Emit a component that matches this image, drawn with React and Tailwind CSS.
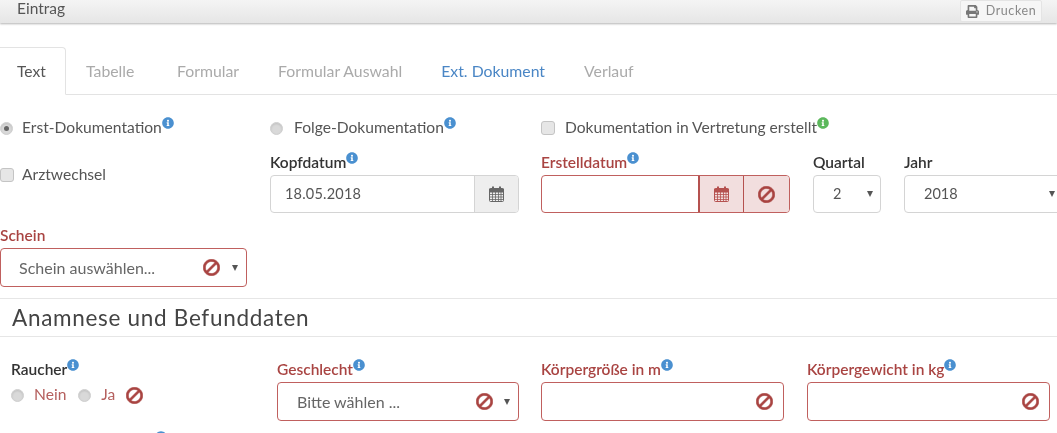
import React from 'react';
import { FaBan, FaInfoCircle, FaPrint } from 'react-icons/fa';

const Info = ({ className = 'text-[#4a90d0]' }) => (
    <FaInfoCircle className={`inline-block relative -top-[6px] w-[12px] h-[12px] ${className}`} />
);

const Ban = () => <FaBan className="w-[17px] h-[17px] text-[#a94442] stroke-[18] shrink-0 -scale-x-100" />;

const Calendar = ({ className }) => (
    <svg viewBox="0 0 15 16" className={`w-[15px] h-[16px] ${className}`} fill="none" stroke="currentColor">
        <rect x="0.5" y="2.5" width="14" height="13" rx="1" />
        <path d="M0.5 3h14v3h-14z" fill="currentColor" />
        <path d="M3.5 6v9M6.5 6v9M9.5 6v9M12 6v9M1 8.5h13M1 11h13M1 13.5h13" strokeWidth="0.8" />
        <path d="M4 0.5v3.5M11 0.5v3.5" strokeWidth="2" />
    </svg>
);

const Caret = () => (
    <span className="w-0 h-0 border-x-[3.5px] border-x-transparent border-t-[6px] border-t-[#555] shrink-0" />
);

const Radio = ({ checked = false }) => (
    <span className="w-[13px] h-[13px] rounded-full border border-[#cfcfcf] bg-[#d9d9d9] shadow-[inset_0_1px_2px_rgba(0,0,0,0.12)] flex items-center justify-center shrink-0">
        {checked && <span className="w-[5px] h-[5px] rounded-full bg-[#666]" />}
    </span>
);

const Check = () => (
    <span className="w-[14px] h-[14px] rounded-[3px] border border-[#c4c4c4] bg-[#e6e6e6] shrink-0" />
);

const Label = ({ error, info = true, children }) => (
    <div className={`h-[22px] text-[15.5px] font-semibold leading-[18px] whitespace-nowrap ${error ? 'text-[#a94442]' : 'text-[#333]'}`}>
        {children}
        {info && <Info />}
    </div>
);

const tabs = [
    ['Tabelle', 'w-[52px] text-[#aaa]'],
    ['Formular', 'text-[#aaa]'],
    ['Formular Auswahl', 'text-[#aaa]'],
    ['Ext. Dokument', 'text-[#4a86c5]'],
    ['Verlauf', 'text-[#aaa]'],
];

export default function App() {
    return (
        <div className="w-[1057px] h-[433px] overflow-hidden bg-white text-[15.6px] text-[#555] blur-[0.3px] font-['Lato','Open_Sans',sans-serif]">
            {/* top bar */}
            <div className="h-[23px] flex justify-between pl-[17px] pr-[15px] bg-gradient-to-b from-[#f4f4f4] to-[#e6e6e6] shadow-[0_1px_2px_rgba(0,0,0,0.3)]">
                <span className="text-[15.5px] leading-[17px] text-[#555]">Eintrag</span>
                <button className="w-[82px] h-[22px] flex items-center justify-center gap-[7px] bg-[#f6f6f6] border border-[#e4e4e4] rounded-[2px] text-[12.5px] tracking-[0.6px] text-[#888]">
                    <FaPrint className="w-[13px] h-[13px] text-[#777]" />
                    Drucken
                </button>
            </div>

            {/* tabs */}
            <div className="mt-[24px] h-[48px] flex border-b border-[#e3e3e3]">
                <div className="w-[66px] h-[48px] pl-[17px] pt-[12px] border border-b-white border-l-0 border-[#e3e3e3] rounded-tr-[4px] bg-white text-[#555]">Text</div>
                <div className="flex pl-[20px] gap-[39px] pt-[12px] text-[15.8px]">
                    {tabs.map(([name, color]) => (
                        <span key={name} className={color}>{name}</span>
                    ))}
                </div>
            </div>

            <div className="mt-[22px] flex">
                <div className="w-[270px] shrink-0">
                    <div className="h-[22px] flex items-center gap-[9px]">
                        <Radio checked />
                        <span>Erst-Dokumentation<Info /></span>
                    </div>
                    <div className="mt-[25px] h-[22px] flex items-center gap-[8px]">
                        <Check />
                        <span>Arztwechsel</span>
                    </div>
                </div>
                <div className="w-[249px] shrink-0">
                    <div className="h-[22px] flex items-center gap-[11px]">
                        <Radio />
                        <span>Folge-Dokumentation<Info /></span>
                    </div>
                    <div className="mt-[14px]">
                        <Label>Kopfdatum</Label>
                        <div className="h-[38px] flex border border-[#d4d4d4] rounded-[4px] overflow-hidden">
                            <div className="flex-1 pl-[14px] leading-[35px] text-[14.5px] tracking-[0.2px]">18.05.2018</div>
                            <div className="w-[44px] flex items-center justify-center bg-[#eee] border-l border-[#d4d4d4]">
                                <Calendar className="text-[#666]" />
                            </div>
                        </div>
                    </div>
                </div>
                <div className="ml-[22px] w-[249px] shrink-0">
                    <div className="h-[22px] flex items-center gap-[10px]">
                        <Check />
                        <span className="whitespace-nowrap">Dokumentation in Vertretung erstellt<Info className="text-[#5cb85c]" /></span>
                    </div>
                    <div className="mt-[14px]">
                        <Label error>Erstelldatum</Label>
                        <div className="h-[38px] flex border border-[#c0605e] rounded-[4px] overflow-hidden">
                            <div className="flex-1" />
                            <div className="w-[45px] flex items-center justify-center bg-[#f2dede] border-l-2 border-[#b5514f]">
                                <Calendar className="text-[#b5514f]" />
                            </div>
                            <div className="w-[46px] flex items-center justify-center bg-[#f2dede] border-l border-[#b5514f]">
                                <Ban />
                            </div>
                        </div>
                    </div>
                </div>
                <div className="ml-[23px] w-[68px] shrink-0 mt-[36px]">
                    <Label info={false}>Quartal</Label>
                    <div className="h-[38px] flex items-center justify-between pl-[19px] pr-[7px] border border-[#d4d4d4] rounded-[4px] text-[14.5px]">
                        <span>2</span>
                        <Caret />
                    </div>
                </div>
                <div className="ml-[23px] w-[158px] shrink-0 mt-[36px]">
                    <Label info={false}>Jahr</Label>
                    <div className="h-[38px] flex items-center justify-between pl-[19px] pr-[6px] border border-[#d4d4d4] rounded-[4px] text-[14.5px]">
                        <span>2018</span>
                        <Caret />
                    </div>
                </div>
            </div>

            {/* Schein */}
            <div className="mt-[13px] w-[247px]">
                <Label error info={false}>Schein</Label>
                <div className="h-[39px] flex items-center pl-[18px] pr-[8px] border border-[#c0605e] rounded-[4px] text-[16px]">
                    <span className="flex-1 text-[#666]">Schein auswählen...</span>
                    <Ban />
                    <span className="w-[12px]" />
                    <Caret />
                </div>
            </div>

            {/* section heading */}
            <div className="mt-[11px] h-[39px] pl-[12px] border-y border-[#e6e6e6] text-[22.5px] leading-[37px] tracking-[0.7px] text-[#444]">
                Anamnese und Befunddaten
            </div>

            <div className="mt-[23px] flex">
                <div className="w-[277px] shrink-0 pl-[11px]">
                    <Label>Raucher</Label>
                    <div className="mt-[3px] h-[20px] flex items-center text-[#b5605e]">
                        <Radio />
                        <span className="ml-[10px]">Nein</span>
                        <span className="ml-[12px]"><Radio /></span>
                        <span className="ml-[10px]">Ja</span>
                        <span className="ml-[11px]"><Ban /></span>
                    </div>
                </div>
                <div className="w-[242px] shrink-0">
                    <Label error>Geschlecht</Label>
                    <div className="h-[39px] flex items-center pl-[19px] pr-[8px] border border-[#c0605e] rounded-[4px] text-[16px]">
                        <span className="flex-1 text-[#666]">Bitte wählen ...</span>
                        <Ban />
                        <span className="w-[11px]" />
                        <Caret />
                    </div>
                </div>
                <div className="ml-[22px] w-[243px] shrink-0">
                    <Label error>Körpergröße in m</Label>
                    <div className="h-[39px] flex items-center justify-end pr-[10px] border border-[#c0605e] rounded-[4px]">
                        <Ban />
                    </div>
                </div>
                <div className="ml-[23px] w-[243px] shrink-0">
                    <Label error>Körpergewicht in kg</Label>
                    <div className="h-[39px] flex items-center justify-end pr-[10px] border border-[#c0605e] rounded-[4px]">
                        <Ban />
                    </div>
                </div>
            </div>

            {/* next row, only its info icon is still in the picture */}
            <div className="mt-[16px] pl-[155px] h-[12px] flex">
                <Info />
            </div>
        </div>
    );
}
